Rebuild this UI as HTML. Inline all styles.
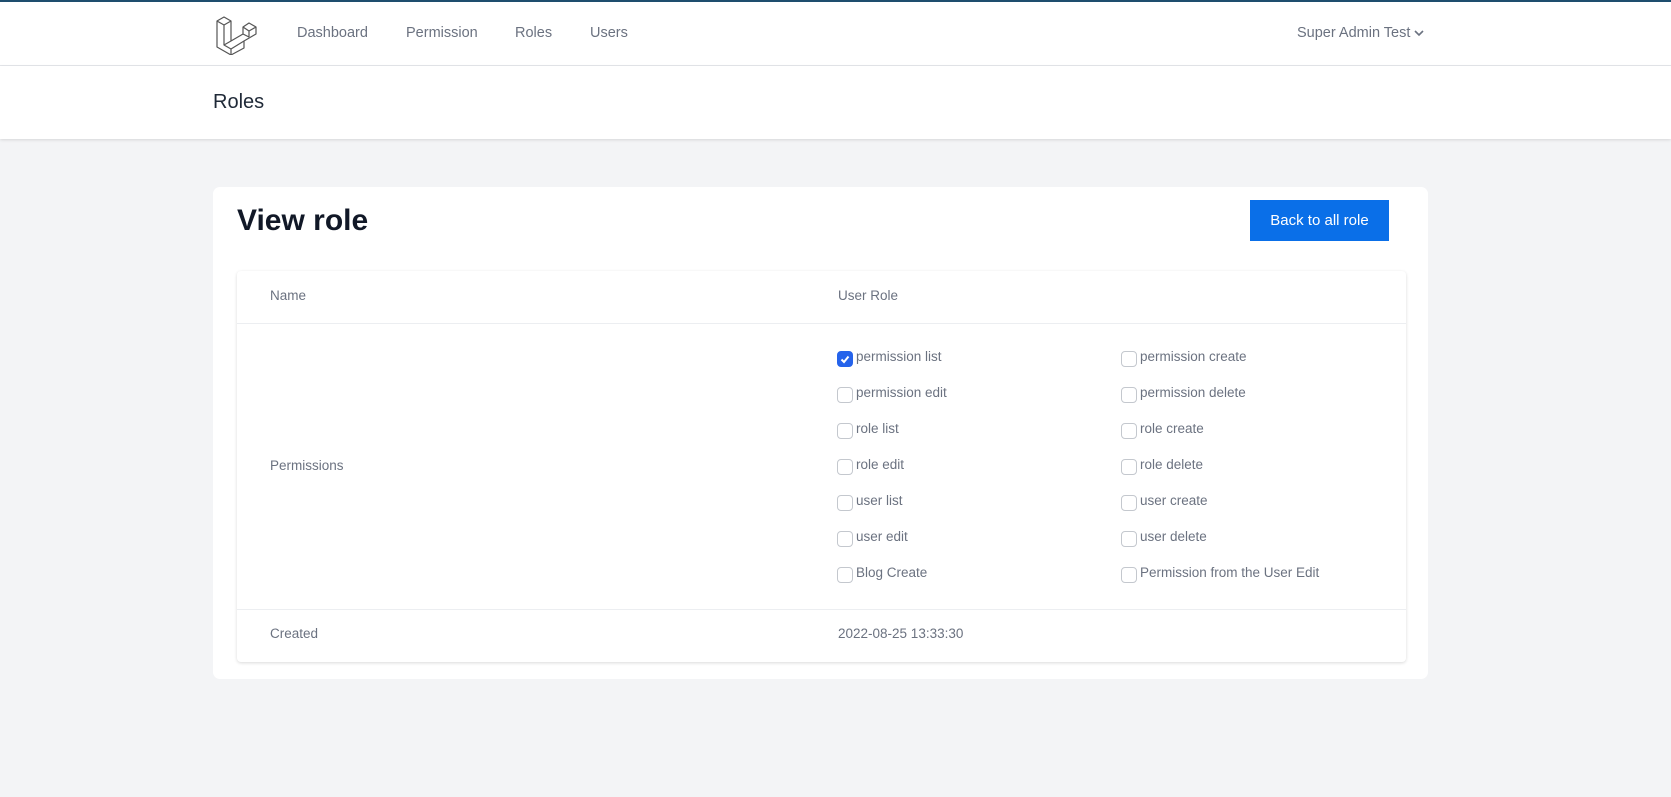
<!DOCTYPE html>
<html><head><style>
*{box-sizing:border-box;margin:0;padding:0}
body{width:1671px;height:797px;background:#f3f4f6;font-family:"Liberation Sans",sans-serif;color:#6b7280;position:relative;overflow:hidden}
.nav{position:absolute;left:0;top:0;width:1671px;height:66px;background:#fff;border-top:2px solid #1e4e6e;border-bottom:1px solid #e5e7eb}
.a{position:absolute;font-size:14.5px;top:23px;color:#6b7280}
.hdr{position:absolute;left:0;top:66px;width:1671px;height:73px;background:#fff;box-shadow:0 1px 3px rgba(0,0,0,.12)}
.hdr h2{position:absolute;left:213px;top:25px;font-size:20px;font-weight:normal;color:#1f2937}
.card{position:absolute;left:213px;top:187px;width:1215px;height:492px;background:#fff;border-radius:7px}
.title{position:absolute;left:237px;top:204px;font-size:30px;font-weight:bold;color:#111827}
.btn{position:absolute;left:1250px;top:200px;width:139px;height:41px;background:#0a6fe8;color:#fff;font-size:15px;text-align:center;line-height:41px}
.tbl{position:absolute;left:237px;top:271px;width:1169px;height:391px;background:#fff;box-shadow:0 1px 3px rgba(0,0,0,.15);border-radius:4px}
.t{position:absolute;font-size:13.5px;color:#6b7280;white-space:nowrap}
.line{position:absolute;left:237px;width:1169px;height:1px;background:#eceef1}
.cb{position:absolute;width:16px;height:16px;border:1px solid #c4c8ce;border-radius:4px;background:#fff}
.cb.on{background:#2563eb;border-color:#2563eb}
</style></head><body>
<div class="nav">
<svg style="position:absolute;left:216px;top:13px" width="42" height="40" viewBox="0 0 42 40" fill="none" stroke="#555" stroke-width="1.2" stroke-linejoin="round"><path d="M1 6 L8 2 L15 6 L15 26 L27 19 L27 12 L33 8 L40 12 L40 19 L28 26 L28 33 L15 40 L1 32 Z M1 6 L8 10 L15 6 M8 10 L8 30 L15 34 L15 40 M8 30 L15 26 M15 34 L28 26 M27 12 L33 16 L40 12 M33 16 L33 22 M27 19 L33 22"/></svg>
<span class="a" style="left:297px">Dashboard</span>
<span class="a" style="left:406px">Permission</span>
<span class="a" style="left:515px">Roles</span>
<span class="a" style="left:590px">Users</span>
<span class="a" style="left:1297px">Super Admin Test <svg width="10" height="8" viewBox="0 0 10 8"><path d="M1 2 L5 6 L9 2" fill="none" stroke="#6b7280" stroke-width="1.6"/></svg></span>
</div>
<div class="hdr"><h2>Roles</h2></div>
<div class="card"></div>
<div class="title">View role</div>
<div class="btn">Back to all role</div>
<div class="tbl"></div>
<div class="line" style="top:323px"></div>
<div class="line" style="top:609px"></div>
<span class="t" style="left:270px;top:288px">Name</span>
<span class="t" style="left:838px;top:288px">User Role</span>
<span class="t" style="left:270px;top:458px">Permissions</span>
<span class="t" style="left:270px;top:626px">Created</span>
<span class="t" style="left:838px;top:626px">2022-08-25 13:33:30</span>

<div class="cb on" style="left:837px;top:351px"><svg width="14" height="14" viewBox="0 0 14 14" style="position:absolute;left:0;top:0"><path d="M3.5 7.5 L6 10 L10.5 4.5" fill="none" stroke="#fff" stroke-width="2"/></svg></div>
<span class="t" style="left:856px;top:349px">permission list</span>
<div class="cb" style="left:1121px;top:351px"></div><span class="t" style="left:1140px;top:349px">permission create</span>
<div class="cb" style="left:837px;top:387px"></div><span class="t" style="left:856px;top:385px">permission edit</span>
<div class="cb" style="left:1121px;top:387px"></div><span class="t" style="left:1140px;top:385px">permission delete</span>
<div class="cb" style="left:837px;top:423px"></div><span class="t" style="left:856px;top:421px">role list</span>
<div class="cb" style="left:1121px;top:423px"></div><span class="t" style="left:1140px;top:421px">role create</span>
<div class="cb" style="left:837px;top:459px"></div><span class="t" style="left:856px;top:457px">role edit</span>
<div class="cb" style="left:1121px;top:459px"></div><span class="t" style="left:1140px;top:457px">role delete</span>
<div class="cb" style="left:837px;top:495px"></div><span class="t" style="left:856px;top:493px">user list</span>
<div class="cb" style="left:1121px;top:495px"></div><span class="t" style="left:1140px;top:493px">user create</span>
<div class="cb" style="left:837px;top:531px"></div><span class="t" style="left:856px;top:529px">user edit</span>
<div class="cb" style="left:1121px;top:531px"></div><span class="t" style="left:1140px;top:529px">user delete</span>
<div class="cb" style="left:837px;top:567px"></div><span class="t" style="left:856px;top:565px">Blog Create</span>
<div class="cb" style="left:1121px;top:567px"></div><span class="t" style="left:1140px;top:565px">Permission from the User Edit</span>
</body></html>
